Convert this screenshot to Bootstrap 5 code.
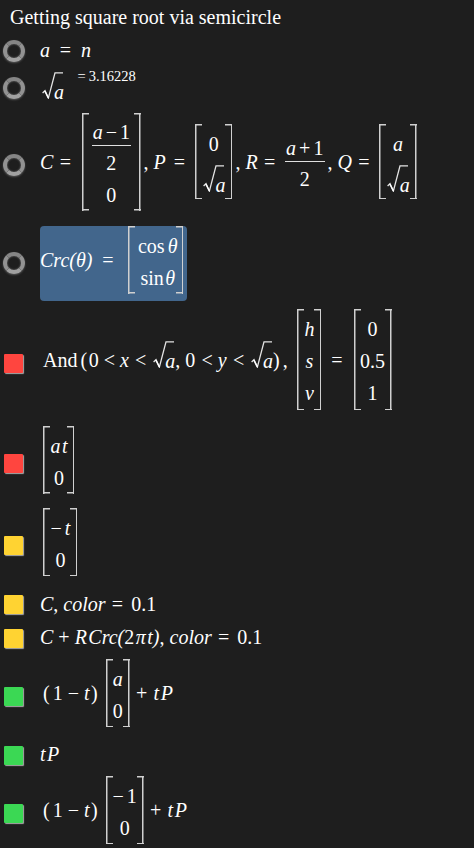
<!DOCTYPE html>
<html lang="en">
<head>
    <meta charset="UTF-8">
    <meta name="viewport" content="width=device-width, initial-scale=1.0">
    <title>Getting square root via semicircle</title>
    <link href="https://cdn.jsdelivr.net/npm/bootstrap@5.3.0/dist/css/bootstrap.min.css" rel="stylesheet">
    <style>
        html, body {
            height: 848px;
            overflow: hidden;
        }

        body {
            background-color: #1e1e1e;
            color: #fff;
            font-family: "Liberation Serif", "Times New Roman", serif;
            font-size: 20px;
            line-height: 20px;
        }

        .heading {
            height: 34px;
            padding: 7px 0 0 10px;
            font-size: 20px;
            line-height: 20px;
        }

        /* expression rows */
        .expr { white-space: nowrap; }
        .h-a { height: 34px; }
        .h-b { height: 39px; }
        .h-c { height: 116px; }
        .h-d { height: 80px; }
        .h-e { height: 120px; }
        .h-f { height: 85px; }
        .h-g { height: 33px; }
        .h-h { height: 34px; }
        .h-i { height: 83px; }

        .slot { width: 40px; padding-left: 3px; }
        .slot-sq { width: 40px; padding-left: 4px; }

        .ring {
            width: 22px;
            height: 22px;
            border: 4px solid #929292;
            border-color: #858585 #929292 #a0a0a0 #929292;
            border-radius: 50%;
            box-shadow: 0 1px 2px #555, inset 0 0 2px #777;
        }

        .chip {
            width: 19px;
            height: 19px;
            border-radius: 1px;
            box-shadow: 1px 1px 1px #a8a8a8;
        }
        .red { background-color: #ff453f; }
        .yellow { background-color: #ffd332; }
        .green { background-color: #3bd854; }

        .math { padding-bottom: 7px; }
        .math-line { padding-bottom: 2px; }
        .in { padding-left: 3px; }

        /* spacing before a symbol */
        .s1 { margin-left: 1.5px; }
        .s2 { margin-left: 3px; }
        .s3 { margin-left: 5px; }
        .s4 { margin-left: 6.3px; }
        .s5 { margin-left: 8px; }
        .s6 { margin-left: 9.8px; }
        .s7 { margin-left: 11px; }
        .s8 { margin-left: 14.5px; }

        /* matrices with square brackets */
        .mat {
            padding: 4px 0 0;
            height: 68px;
            background:
                linear-gradient(#d0d0d0, #d0d0d0) left top / 7px 1.5px,
                linear-gradient(#d0d0d0, #d0d0d0) left bottom / 7px 1.5px,
                linear-gradient(#d0d0d0, #d0d0d0) right top / 7px 1.5px,
                linear-gradient(#d0d0d0, #d0d0d0) right bottom / 7px 1.5px,
                linear-gradient(#d0d0d0, #d0d0d0) left / 1.5px 100%,
                linear-gradient(#d0d0d0, #d0d0d0) right / 1.5px 100%;
            background-repeat: no-repeat;
        }
        .mat > div { height: 32px; }
        .tall { height: 101px; }
        .mat-c { width: 58.7px; height: 98px; }
        .mat-c > .frac-cell { height: 62px; padding-top: 5px; }
        .mat-p { width: 37.5px; height: 75px; }
        .mat-p > div:last-child { height: 39px; padding: 5px 0 0 1px; }
        .w-crc { width: 55.5px; padding-left: 4px; }
        .w-h { width: 24px; }
        .w-0 { width: 38px; }
        .w-at { width: 31px; padding-left: 1px; }
        .w-t { width: 34px; padding-left: 1px; }

        .frac-top { border-bottom: 1.5px solid #e0e0e0; width: 39.5px; height: 24px; }
        .frac-bottom { height: 27px; padding-top: 7px; }
        .frac { padding-top: 4px; }

        .root { height: 27px; }
        .root svg { width: 22px; height: 27px; }
        .root i { margin-left: -9.5px; padding-top: 12px; }
        .root-up { margin-top: -10px; }
        .root-row { margin-top: -4px; }

        .value { font-size: 14.5px; margin: -19px 0 0 13.5px; }

        .selected {
            background-color: #42668c;
            border-radius: 4px;
            width: 147px;
            height: 75px;
        }
    </style>
</head>
<body>
    <svg class="d-none">
        <symbol id="radical" viewBox="0 0 22 27">
            <path d="M.6 21 L3 18.7 L6.4 26 L13 .8 H21" fill="none" stroke="#e4e4e4" stroke-width="1.3"/>
            <path d="M2.8 19 L6.3 26" stroke="#fff" stroke-width="1.4"/>
        </symbol>
    </svg>

    <h1 class="heading m-0 fw-normal">Getting square root via semicircle</h1>

    <div class="expr d-flex align-items-center h-a">
        <div class="slot"><div class="ring"></div></div>
        <div class="math-line d-flex"><i>a</i><span class="s6">=</span><i class="s6">n</i></div>
    </div>

    <div class="expr d-flex align-items-center h-b">
        <div class="slot"><div class="ring"></div></div>
        <div class="d-flex align-items-center root-row">
            <div class="root d-flex align-items-center s1"><svg><use href="#radical"/></svg><i>a</i></div>
            <div class="value">=<span class="s2">3.16228</span></div>
        </div>
    </div>

    <div class="expr d-flex align-items-center h-c">
        <div class="slot"><div class="ring"></div></div>
        <div class="math d-flex align-items-center">
            <i>C</i><span class="s4">=</span>
            <div class="mat mat-c s7 d-flex flex-column align-items-center">
                <div class="frac-cell text-center">
                    <div class="frac-top"><i>a</i><span class="s2">−</span><span class="s2">1</span></div>
                    <div class="frac-bottom">2</div>
                </div>
                <div class="d-flex align-items-center">0</div>
            </div>
            <span class="s2">,</span><i class="s3">P</i><span class="s5">=</span>
            <div class="mat mat-p s6 d-flex flex-column align-items-center">
                <div class="d-flex align-items-center">0</div>
                <div><div class="root d-flex align-items-center"><svg><use href="#radical"/></svg><i>a</i></div></div>
            </div>
            <span class="s2">,</span><i class="s3">R</i><span class="s4">=</span>
            <div class="frac s6 text-center">
                <div class="frac-top"><i>a</i><span class="s2">+</span><span class="s2">1</span></div>
                <div class="frac-bottom">2</div>
            </div>
            <span class="s2">,</span><i class="s3">Q</i><span class="s4">=</span>
            <div class="mat mat-p s6 d-flex flex-column align-items-center">
                <div class="d-flex align-items-center"><i>a</i></div>
                <div><div class="root d-flex align-items-center"><svg><use href="#radical"/></svg><i>a</i></div></div>
            </div>
        </div>
    </div>

    <div class="expr d-flex align-items-center h-d">
        <div class="slot"><div class="ring"></div></div>
        <div class="selected math d-flex align-items-center">
            <i>Crc(θ)</i><span class="s6">=</span>
            <div class="mat w-crc s8 d-flex flex-column align-items-center">
                <div class="d-flex align-items-center">cos<i class="s2">θ</i></div>
                <div class="d-flex align-items-center">sin<i class="s1">θ</i></div>
            </div>
        </div>
    </div>

    <div class="expr d-flex align-items-center h-e">
        <div class="slot-sq"><div class="chip red"></div></div>
        <div class="math in d-flex align-items-center">
            <span>And</span><span class="s2">(</span><span class="s1">0</span><span class="s3">&lt;</span><i class="s3">x</i><span class="s4">&lt;</span>
            <div class="root root-up s4 d-flex align-items-center"><svg><use href="#radical"/></svg><i>a</i></div>
            <span>,</span><span class="s3">0</span><span class="s4">&lt;</span><i class="s3">y</i><span class="s4">&lt;</span>
            <div class="root root-up s4 d-flex align-items-center"><svg><use href="#radical"/></svg><i>a</i></div>
            <span>)</span><span class="s2">,</span>
            <div class="mat tall w-h s6 d-flex flex-column align-items-center">
                <div class="d-flex align-items-center"><i>h</i></div>
                <div class="d-flex align-items-center"><i>s</i></div>
                <div class="d-flex align-items-center"><i>v</i></div>
            </div>
            <span class="s6">=</span>
            <div class="mat tall w-0 s7 d-flex flex-column align-items-center">
                <div class="d-flex align-items-center">0</div>
                <div class="d-flex align-items-center">0.5</div>
                <div class="d-flex align-items-center">1</div>
            </div>
        </div>
    </div>

    <div class="expr d-flex align-items-center h-d">
        <div class="slot-sq"><div class="chip red"></div></div>
        <div class="math in d-flex">
            <div class="mat w-at d-flex flex-column align-items-center">
                <div class="d-flex align-items-center"><i>a</i><i class="s1">t</i></div>
                <div class="d-flex align-items-center">0</div>
            </div>
        </div>
    </div>

    <div class="expr d-flex align-items-center h-f">
        <div class="slot-sq"><div class="chip yellow"></div></div>
        <div class="math in d-flex">
            <div class="mat w-t d-flex flex-column align-items-center">
                <div class="d-flex align-items-center">−<i class="s2">t</i></div>
                <div class="d-flex align-items-center">0</div>
            </div>
        </div>
    </div>

    <div class="expr d-flex align-items-center h-g">
        <div class="slot-sq"><div class="chip yellow"></div></div>
        <div class="math-line d-flex"><i>C</i>,<i class="s3">color</i><span class="s4">=</span><span class="s5">0.1</span></div>
    </div>

    <div class="expr d-flex align-items-center h-h">
        <div class="slot-sq"><div class="chip yellow"></div></div>
        <div class="math-line d-flex"><i>C</i><span class="s3">+</span><i class="s3">R</i><i class="s1">Crc(</i>2<i class="s1">π</i><i class="s1">t</i><i>)</i>,<i class="s3">color</i><span class="s4">=</span><span class="s5">0.1</span></div>
    </div>

    <div class="expr d-flex align-items-center h-i">
        <div class="slot-sq"><div class="chip green"></div></div>
        <div class="math in d-flex align-items-center">
            <span>(</span><span class="s2">1</span><span class="s3">−</span><i class="s3">t</i><span class="s1">)</span>
            <div class="mat w-h s5 d-flex flex-column align-items-center">
                <div class="d-flex align-items-center"><i>a</i></div>
                <div class="d-flex align-items-center">0</div>
            </div>
            <span class="s4">+</span><i class="s4">t</i><i class="s1">P</i>
        </div>
    </div>

    <div class="expr d-flex align-items-center h-h">
        <div class="slot-sq"><div class="chip green"></div></div>
        <div class="math-line d-flex"><i>t</i><i class="s1">P</i></div>
    </div>

    <div class="expr d-flex align-items-center h-i">
        <div class="slot-sq"><div class="chip green"></div></div>
        <div class="math in d-flex align-items-center">
            <span>(</span><span class="s2">1</span><span class="s3">−</span><i class="s3">t</i><span class="s1">)</span>
            <div class="mat w-0 s5 d-flex flex-column align-items-center">
                <div class="d-flex align-items-center">−<span class="s2">1</span></div>
                <div class="d-flex align-items-center">0</div>
            </div>
            <span class="s4">+</span><i class="s4">t</i><i class="s1">P</i>
        </div>
    </div>

    <script src="https://cdn.jsdelivr.net/npm/bootstrap@5.3.0/dist/js/bootstrap.bundle.min.js"></script>
</body>
</html>
